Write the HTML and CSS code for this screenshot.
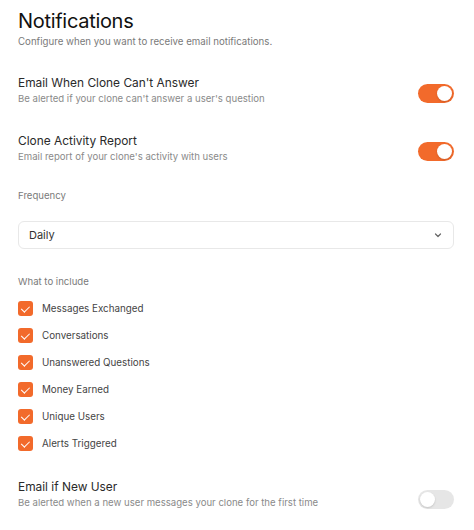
FILE: index.html
```html
<!DOCTYPE html>
<html lang="en">
<head>
  <meta charset="UTF-8" />
  <meta name="viewport" content="width=device-width, initial-scale=1.0" />
  <title>Notifications</title>
  <link rel="stylesheet" href="styles.css">
</head>
<body>
  <div class="page">
    <h1 class="title">Notifications</h1>
    <p class="lead">Configure when you want to receive email notifications.</p>

    <div class="setting first">
      <div class="setting-text">
        <div class="setting-name">Email When Clone Can't Answer</div>
        <div class="setting-desc">Be alerted if your clone can't answer a user's question</div>
      </div>
      <span class="toggle on"></span>
    </div>

    <div class="setting">
      <div class="setting-text">
        <div class="setting-name">Clone Activity Report</div>
        <div class="setting-desc">Email report of your clone's activity with users</div>
      </div>
      <span class="toggle on"></span>
    </div>

    <div class="field-label">Frequency</div>
    <div class="select">
      <span>Daily</span>
      <svg width="10" height="10" viewBox="0 0 10 10"><path d="M2.5 4 L5 6.5 L7.5 4" fill="none" stroke="#666" stroke-width="1.2" stroke-linecap="round" stroke-linejoin="round"/></svg>
    </div>

    <div class="field-label include">What to include</div>
    <ul class="checks">
      <li><span class="box"></span>Messages Exchanged</li>
      <li><span class="box"></span>Conversations</li>
      <li><span class="box"></span>Unanswered Questions</li>
      <li><span class="box"></span>Money Earned</li>
      <li><span class="box"></span>Unique Users</li>
      <li><span class="box"></span>Alerts Triggered</li>
    </ul>

    <div class="setting last">
      <div class="setting-text">
        <div class="setting-name">Email if New User</div>
        <div class="setting-desc">Be alerted when a new user messages your clone for the first time</div>
      </div>
      <span class="toggle"></span>
    </div>
  </div>
</body>
</html>
```

FILE: styles.css
```css
*{box-sizing:border-box;font-family:Inter,"Noto Sans",sans-serif}
body{margin:0;background:#fff;color:#222}
.page{padding:9px 20px 0 18px}
.title{margin:0;font-size:20px;line-height:24px;font-weight:400;letter-spacing:-.3px;color:#111}
.lead{margin:2px 0 0;font-size:9.7px;line-height:14px;color:#7a7a7a}
.setting{display:flex;justify-content:space-between;align-items:center;margin-top:26px}
.setting.first{margin-top:25px}
.setting.last{margin-top:21px}
.setting-name{font-size:11.9px;line-height:17px;color:#2a2a2a}
.setting-desc{margin-top:1px;font-size:9.6px;line-height:14px;color:#8a8a8a}
.toggle{position:relative;width:36px;height:19px;border-radius:10px;background:#e6e6e6;margin-top:6px;flex:none}
.toggle::after{content:"";position:absolute;left:2px;top:2px;width:15px;height:15px;border-radius:50%;background:#fff;box-shadow:0 1px 2px rgba(0,0,0,.15)}
.toggle.on{background:#f26a2b}
.toggle.on::after{left:19px}
.setting.last .toggle{margin-top:10px}
.field-label{margin-top:25px;font-size:9.6px;line-height:14px;color:#7a7a7a}
.select{display:flex;justify-content:space-between;align-items:center;margin-top:18px;height:28px;padding:0 10px 0 10px;border:1px solid #e8e8e8;border-radius:6px;font-size:11px;color:#333}
.field-label.include{margin-top:26px}
.checks{list-style:none;margin:6px 0 0;padding:0}
.checks li{display:flex;align-items:center;gap:9px;height:27px;font-size:9.8px;color:#444}
.box{width:15px;height:15px;border-radius:3px;background:#f26a2b;position:relative;flex:none}
.box::after{content:"";position:absolute;left:5px;top:2.5px;width:3.5px;height:7px;border:solid #fff;border-width:0 1.5px 1.5px 0;transform:rotate(45deg)}
```
